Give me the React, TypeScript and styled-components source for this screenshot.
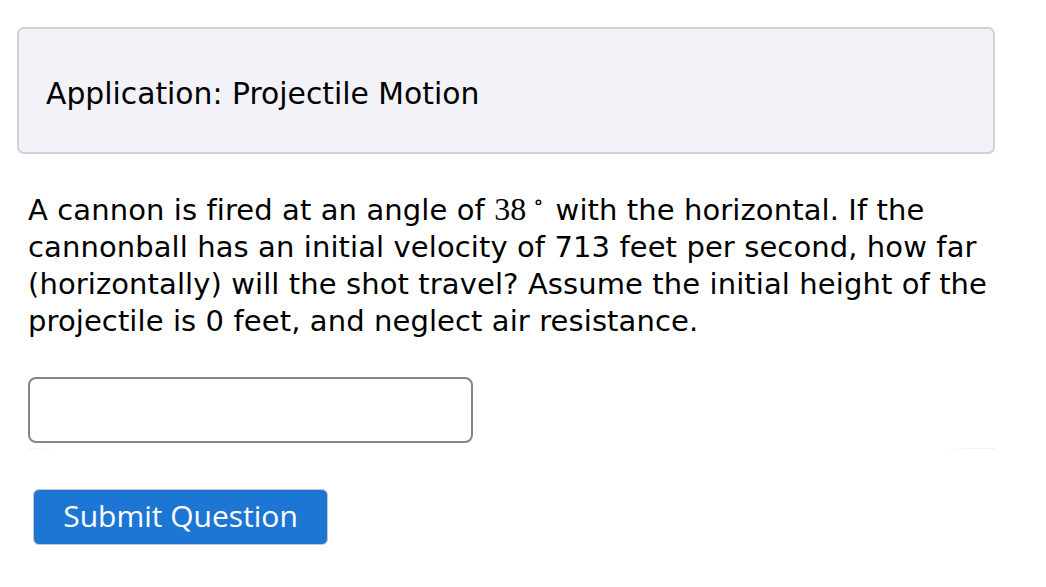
import styled, { createGlobalStyle } from 'styled-components'

const GlobalStyle = createGlobalStyle`
  html, body {
    margin: 0;
    padding: 0;
    background: #ffffff;
  }
  body {
    font-family: 'DejaVu Sans', 'Open Sans', sans-serif;
    color: #000;
  }
`

const Page = styled.main`
  padding: 27px 51px 0 17px;
  width: 1046px;
  box-sizing: border-box;
`

const HeaderBox = styled.section`
  box-sizing: border-box;
  height: 127px;
  display: flex;
  align-items: center;
  padding: 6px 27px 0;
  background: #f2f2f8;
  border: 2px solid #d2d2d6;
  border-radius: 7px;
`

const Title = styled.h1`
  margin: 0;
  font-size: 29.8px;
  font-weight: 400;
  line-height: 1;
`

const Body = styled.div`
  padding: 38px 0 0 11px;
`

const Question = styled.p`
  margin: 0;
  font-size: 29px;
  letter-spacing: 0.1px;
  line-height: 37px;
`

const MathNum = styled.span`
  font-family: 'Liberation Serif', 'DejaVu Serif', serif;
  font-size: 32px;
  letter-spacing: 0;
  line-height: 0;
`

const Degree = styled.span`
  font-family: 'Liberation Serif', 'DejaVu Serif', serif;
  font-size: 21px;
  line-height: 0;
  vertical-align: 11px;
  margin: 0 12px 0 7px;
`

const AnswerInput = styled.input`
  display: block;
  box-sizing: border-box;
  margin-top: 37px;
  width: 445px;
  height: 66px;
  border: 2px solid #858585;
  border-radius: 8px;
  background: #fff;
  font-size: 28px;
  padding: 0 12px;
  outline: none;
`

const Divider = styled.div`
  height: 1px;
  margin-top: 5px;
  background: linear-gradient(90deg, #f3f3f3 0px, #ffffff 30px, #ffffff calc(100% - 60px), #f0f0f0 100%);
`

const SubmitButton = styled.button`
  display: block;
  box-sizing: border-box;
  margin: 40px 0 0 5px;
  width: 295px;
  height: 56px;
  background: #1e76d4;
  color: #fff;
  border: 1px solid #c8c8c8;
  border-radius: 6px;
  font-family: 'Open Sans', 'Noto Sans', sans-serif;
  font-size: 30px;
  padding: 0 0 3px;
  cursor: pointer;
`

export default function App() {
  return (
    <>
      <GlobalStyle />
      <Page>
        <HeaderBox>
          <Title>Application: Projectile Motion</Title>
        </HeaderBox>
        <Body>
          <Question>
            A cannon is fired at an angle of <MathNum>38</MathNum>
            <Degree>∘</Degree>with the horizontal. If the cannonball has an
            initial velocity of 713 feet per second, how far (horizontally)
            will the shot travel? Assume the initial height of the projectile
            is 0 feet, and neglect air resistance.
          </Question>
          <AnswerInput type="text" aria-label="answer" />
          <Divider />
          <SubmitButton type="button">Submit Question</SubmitButton>
        </Body>
      </Page>
    </>
  )
}
